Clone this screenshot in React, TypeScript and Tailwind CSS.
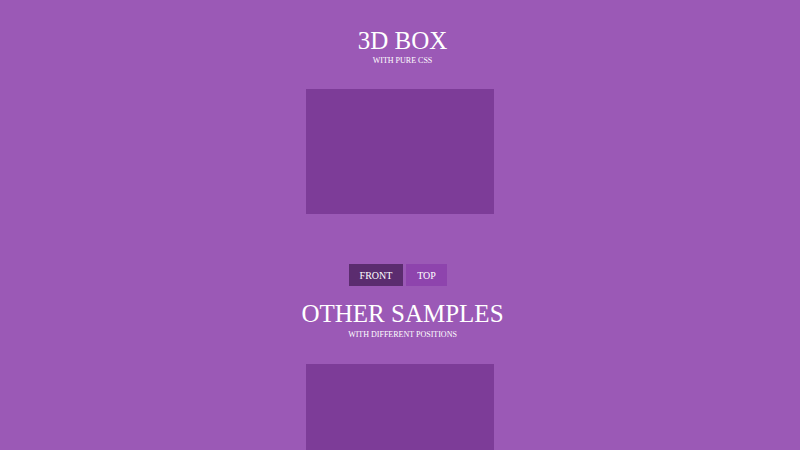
import React from 'react';

const App: React.FC = () => {
  return (
    <div
      className="min-h-screen bg-[#9b59b6] text-white text-center"
      style={{ fontFamily: '"Liberation Serif", serif' }}
    >
      {/* Header */}
      <header className="pt-[26px] pl-[5px]">
        <h1 className="text-[25px] leading-[30px]">3D BOX</h1>
        <p className="text-[8px] leading-[8px] mt-[1px]">WITH PURE CSS</p>
      </header>

      {/* Box */}
      <div className="mx-auto mt-[24px] w-[188px] h-[125px] bg-[#7d3c98]" />

      {/* Buttons */}
      <div className="flex justify-center gap-[3px] mt-[50px] pr-[4px]">
        <button className="w-[54px] h-[22px] bg-[#5b2c6f] text-[10px] text-white">FRONT</button>
        <button className="w-[41px] h-[22px] bg-[#8e44ad] text-[10px] text-white">TOP</button>
      </div>

      {/* Other samples */}
      <section className="mt-[13px]">
        <div className="pl-[5px]">
          <h2 className="text-[25px] leading-[30px]">OTHER SAMPLES</h2>
          <p className="text-[8px] leading-[8px] mt-[2px]">WITH DIFFERENT POSITIONS</p>
        </div>
        <div className="mx-auto mt-[25px] w-[188px] h-[125px] bg-[#7d3c98]" />
      </section>
    </div>
  );
};

export default App;
